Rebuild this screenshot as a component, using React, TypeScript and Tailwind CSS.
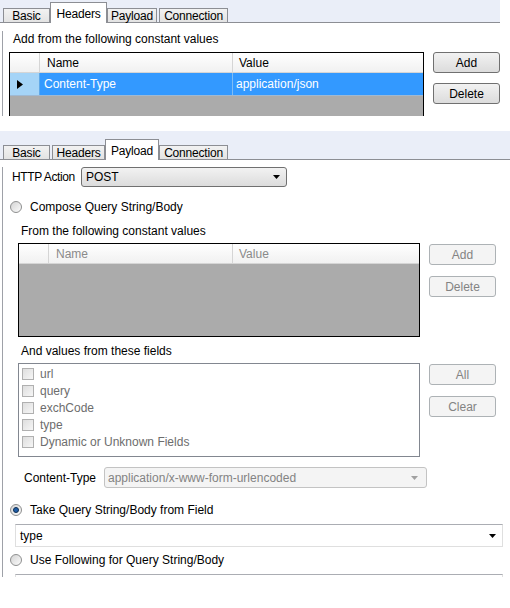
import type { ReactNode } from "react";

type Tab = { label: string; base: string; active: string };

const TABS: Tab[] = [
  { label: "Basic", base: "ml-[2px] w-[47px]", active: "ml-0 -mr-[2px] w-[51px]" },
  { label: "Headers", base: "ml-[2px] w-[53px]", active: "ml-0 -mr-[2px] w-[57px]" },
  { label: "Payload", base: "ml-[2px] w-[50px]", active: "ml-0 -mr-[2px] w-[54px]" },
  { label: "Connection", base: "ml-[2px] w-[69px]", active: "ml-0 -mr-[2px] w-[73px]" },
];

const FIELDS = ["url", "query", "exchCode", "type", "Dynamic or Unknown Fields"];

function TabStrip({ active, tall }: { active: string; tall?: boolean }) {
  return (
    <div
      className={`flex items-end pl-[1px] bg-[#eaeef8] border-b border-[#8c8e94] ${tall ? "h-[29px]" : "h-[23px]"}`}
    >
      {TABS.map((tab) =>
        tab.label === active ? (
          <div
            key={tab.label}
            className={`${tab.active} relative z-10 -mb-px h-[21px] bg-white border border-b-0 border-[#8c8e94] flex items-start justify-center pt-[2px] tracking-[-0.2px]`}
          >
            {tab.label}
          </div>
        ) : (
          <div
            key={tab.label}
            className={`${tab.base} h-[14px] bg-gradient-to-b from-[#f2f2f2] to-[#e3e3e3] border border-b-0 border-[#8c8e94] flex items-center justify-center leading-none whitespace-nowrap tracking-[-0.2px]`}
          >
            {tab.label}
          </div>
        ),
      )}
    </div>
  );
}

function Button({ label, disabled, className = "" }: { label: string; disabled?: boolean; className?: string }) {
  return (
    <div
      className={`w-[67px] h-[21px] rounded-[3px] border flex items-center justify-center ${
        disabled
          ? "border-[#adb2b5] bg-[#f4f4f4] text-[#838383]"
          : "border-[#707070] bg-gradient-to-b from-[#f2f2f2] to-[#dcdcdc] text-black"
      } ${className}`}
    >
      {label}
    </div>
  );
}

function Arrow({ color = "#000" }: { color?: string }) {
  return (
    <svg width="7" height="4" viewBox="0 0 7 4">
      <path d="M0 0h7L3.5 4z" fill={color} />
    </svg>
  );
}

function Radio({ checked, children }: { checked?: boolean; children: ReactNode }) {
  return (
    <div className="flex items-center h-[16px] pl-[7px]">
      <span className="w-[12px] h-[12px] rounded-full border border-[#8e8f8f] bg-gradient-to-br from-[#d4d4d4] to-[#fbfbfb] flex items-center justify-center">
        {checked && <span className="w-[6px] h-[6px] rounded-full bg-[#1f5ea8] border border-[#0d2d52]" />}
      </span>
      <span className="ml-[8px]">{children}</span>
    </div>
  );
}

function GridHeader({ muted }: { muted?: boolean }) {
  return (
    <div className={`flex h-[20px] bg-gradient-to-b from-white to-[#f1f1f1] border-b border-[#d5d5d5] ${muted ? "text-[#8a8a8a]" : ""}`}>
      <div className="w-[30px] border-r border-[#d5d5d5]" />
      <div className={`${muted ? "w-[184px]" : "w-[193px]"} border-r border-[#d5d5d5] flex items-center pl-[7px]`}>Name</div>
      <div className="flex-1 flex items-center pl-[6px]">Value</div>
    </div>
  );
}

export default function App() {
  return (
    <div className="w-[510px] h-[608px] bg-white overflow-hidden text-[12px] text-black font-['Liberation_Sans',Arial,sans-serif]">
      {/* Headers tab */}
      <div className="w-[500px] h-[116px] overflow-hidden">
        <TabStrip active="Headers" />
        <div className="ml-[2px] border-l border-[#9ea1a8] h-[93px] pl-[6px]">
          <div className="h-[16px] mt-[8px] pl-[4px] flex items-center">Add from the following constant values</div>
          <div className="flex mt-[5px] gap-[9px]">
            <div className="w-[417px] h-[70px] border border-black bg-[#ababab]">
              <GridHeader />
              <div className="flex h-[23px] border-b border-[#9fb9d3]">
                <div className="w-[30px] bg-[#a5d4f7] border-r border-[#5fa8e8] flex items-center pl-[7px]">
                  <svg width="6" height="9" viewBox="0 0 6 9">
                    <path d="M0 0l6 4.5L0 9z" fill="#000" />
                  </svg>
                </div>
                <div className="w-[193px] bg-[#3399ff] text-white border-r border-[#7fbdf5] flex items-center pl-[4px]">
                  Content-Type
                </div>
                <div className="flex-1 bg-[#3399ff] text-white flex items-center pl-[3px]">application/json</div>
              </div>
            </div>
            <div className="flex flex-col gap-[10px]">
              <Button label="Add" />
              <Button label="Delete" />
            </div>
          </div>
        </div>
      </div>

      {/* Payload tab */}
      <div className="mt-[15px] h-[446px] overflow-hidden">
        <TabStrip active="Payload" tall />
        <div className="ml-[2px] border-l border-[#9ea1a8] h-[418px] pl-0">
          <div className="flex items-center h-[20px] mt-[7px] pl-[9px]">
            <span className="w-[69px] tracking-[-0.4px]">HTTP Action</span>
            <div className="w-[206px] h-[20px] rounded-[3px] border border-[#707070] bg-gradient-to-b from-[#f2f2f2] to-[#dcdcdc] flex items-center justify-between pl-[4px] pr-[6px]">
              <span>POST</span>
              <Arrow />
            </div>
          </div>

          <div className="mt-[12px]">
            <Radio>Compose Query String/Body</Radio>
          </div>

          <div className="h-[16px] mt-[8px] pl-[18px] flex items-center">From the following constant values</div>

          <div className="flex mt-[4px] pl-[15px] gap-[9px]">
            <div className="w-[402px] h-[94px] border border-black bg-[#ababab]">
              <GridHeader muted />
            </div>
            <div className="flex flex-col gap-[11px] pt-px">
              <Button label="Add" disabled />
              <Button label="Delete" disabled />
            </div>
          </div>

          <div className="h-[16px] mt-[6px] pl-[18px] flex items-center">And values from these fields</div>

          <div className="flex mt-[4px] pl-[15px] gap-[9px]">
            <div className="w-[402px] h-[94px] border border-[#828790] bg-white pt-[1px] pl-[3px]">
              {FIELDS.map((field) => (
                <div key={field} className="flex items-center h-[17px] text-[#6d6d6d]">
                  <span className="w-[12px] h-[12px] border border-[#b0b0b0] bg-gradient-to-br from-[#dedede] to-[#f6f6f6]" />
                  <span className="ml-[6px]">{field}</span>
                </div>
              ))}
            </div>
            <div className="flex flex-col gap-[11px] pt-px">
              <Button label="All" disabled />
              <Button label="Clear" disabled />
            </div>
          </div>

          <div className="flex items-center mt-[10px] pl-[21px]">
            <span className="w-[80px]">Content-Type</span>
            <div className="w-[323px] h-[21px] rounded-[3px] border border-[#c3c3c3] bg-[#f4f4f4] text-[#838383] flex items-center justify-between pl-[3px] pr-[8px]">
              <span>application/x-www-form-urlencoded</span>
              <Arrow color="#a0a0a0" />
            </div>
          </div>

          <div className="mt-[14px]">
            <Radio checked>Take Query String/Body from Field</Radio>
          </div>

          <div className="ml-[12px] mt-[6px] w-[488px] h-[23px] border border-[#dfdfdf] border-t-[#abadb3] bg-white flex items-center justify-between pl-[4px] pr-[6px]">
            <span>type</span>
            <Arrow />
          </div>

          <div className="mt-[5px]">
            <Radio>Use Following for Query String/Body</Radio>
          </div>

          <div className="ml-[12px] mt-[6px] w-[488px] h-[23px] border border-[#dfdfdf] border-t-[#abadb3] bg-white" />
        </div>
      </div>
    </div>
  );
}
